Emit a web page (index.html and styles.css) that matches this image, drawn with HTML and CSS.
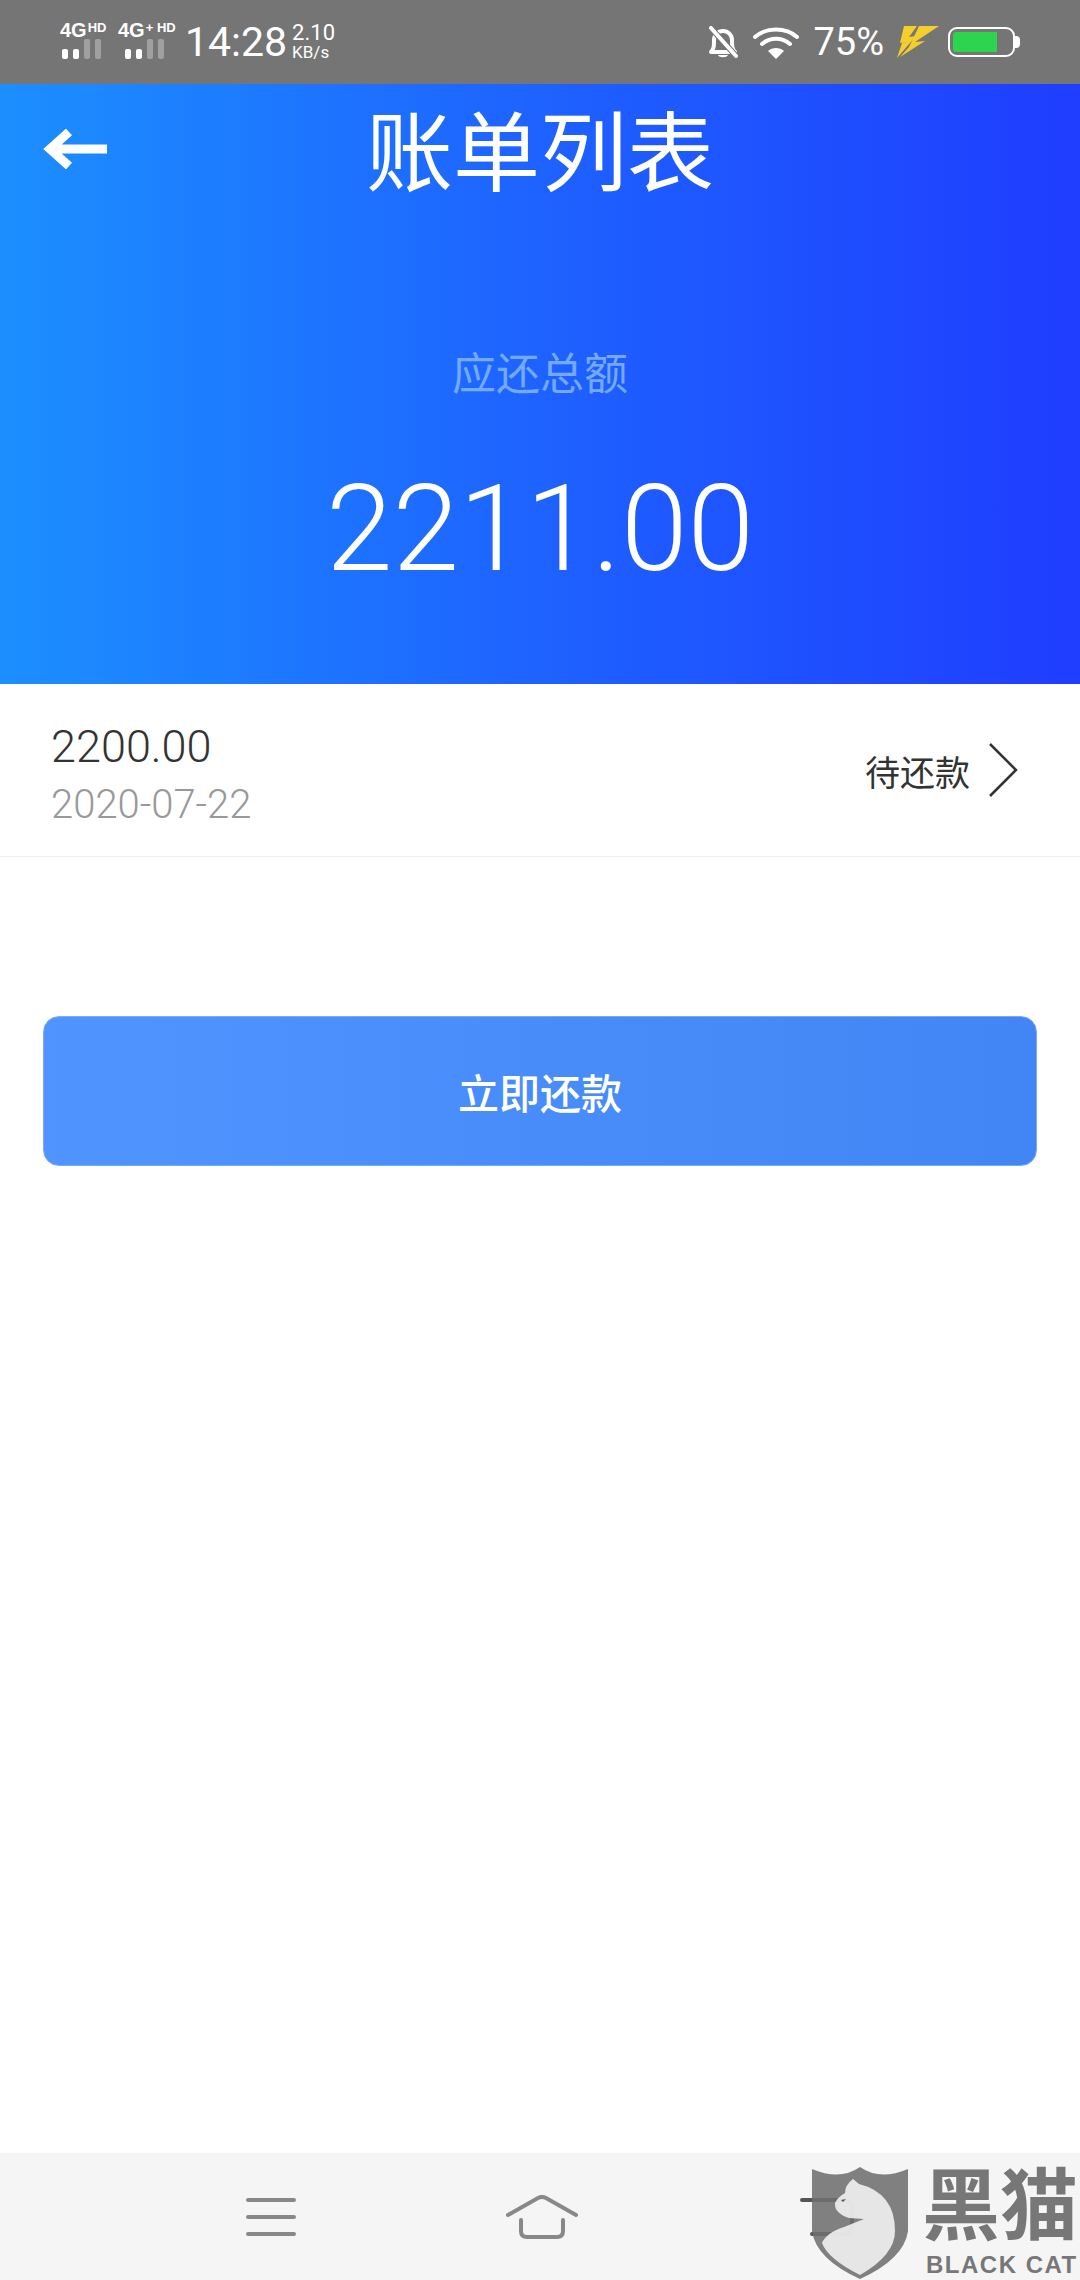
FILE: index.html
```html
<!DOCTYPE html>
<html lang="zh-CN">
<head>
    <meta charset="UTF-8">
    <title>账单列表</title>
    <link rel="stylesheet" href="styles.css">
</head>
<body>
    <div class="phone">
        <div class="status-bar">
            <div class="signal">
                <div class="sim">
                    <div class="sim-label">4G<span class="sim-tag">HD</span></div>
                    <div class="bars"><i class="bar"></i><i class="bar"></i><i class="bar off"></i><i class="bar off"></i></div>
                </div>
                <div class="sim">
                    <div class="sim-label">4G<span class="sim-tag">+ HD</span></div>
                    <div class="bars"><i class="bar"></i><i class="bar"></i><i class="bar off"></i><i class="bar off"></i></div>
                </div>
            </div>
            <div class="clock">14:28</div>
            <div class="speed">
                <span class="speed-value">2.10</span>
                <span class="speed-unit">KB/s</span>
            </div>
            <div class="status-right">
                <svg class="icon-bell" width="30" height="33" viewBox="0 0 30 33">
                    <path d="M3 26c3-3 3-6 3-12 0-5 4-9 9-9s9 4 9 9c0 6 0 9 3 12z" fill="none" stroke="#fff" stroke-width="4" stroke-linejoin="round"/>
                    <path d="M10 29c1 3 9 3 10 0z" fill="#fff"/>
                    <path d="M3 2l25 28" stroke="#757575" stroke-width="6"/>
                    <path d="M3 2l25 28" stroke="#fff" stroke-width="4" stroke-linecap="round"/>
                </svg>
                <svg class="icon-wifi" width="46" height="33" viewBox="0 0 46 33">
                    <path d="M2 11C13 1 33 1 44 11" fill="none" stroke="#fff" stroke-width="4" stroke-linecap="round"/>
                    <path d="M9 18c8-7 20-7 28 0" fill="none" stroke="#fff" stroke-width="4" stroke-linecap="round"/>
                    <path d="M23 33l-8-8c4-4 12-4 16 0z" fill="#fff"/>
                </svg>
                <span class="battery-pct">75%</span>
                <svg class="icon-bolt" width="42" height="32" viewBox="0 0 42 32">
                    <path d="M7 0h13L12 11l7-1L0 32l5-15 7-1-9 1z" fill="#f4cf2b"/>
                    <path d="M22 0h20L18 16l10-1L3 31l9-10z" fill="#f4cf2b"/>
                </svg>
                <div class="battery">
                    <div class="battery-body"><div class="battery-fill"></div></div>
                    <div class="battery-nub"></div>
                </div>
            </div>
        </div>

        <div class="summary">
            <div class="title-row">
                <svg class="back" width="64" height="40" viewBox="0 0 64 40">
                    <path d="M64 20H8M26 3L7 20l19 17" fill="none" stroke="#fff" stroke-width="9"/>
                </svg>
                <h1>账单列表</h1>
            </div>
            <div class="total-label">应还总额</div>
            <div class="total-value">2211.00</div>
        </div>

        <div class="bill-row">
            <div class="bill-info">
                <div class="bill-amount">2200.00</div>
                <div class="bill-date">2020-07-22</div>
            </div>
            <div class="bill-state">
                <span>待还款</span>
                <svg width="30" height="54" viewBox="0 0 30 54">
                    <path d="M2 1l26 26L2 53" fill="none" stroke="#333" stroke-width="2.5"/>
                </svg>
            </div>
        </div>

        <div class="action">
            <button class="pay-button">立即还款</button>
        </div>

        <div class="nav-bar">
            <svg class="nav-menu" width="50" height="38" viewBox="0 0 50 38">
                <path d="M2 2h46M2 19h46M2 36h46" stroke="#888" stroke-width="4" stroke-linecap="round"/>
            </svg>
            <svg class="nav-home" width="72" height="44" viewBox="0 0 72 44">
                <path d="M2 20L32 3q4-2 8 0l30 17" fill="none" stroke="#888" stroke-width="4" stroke-linecap="round"/>
                <path d="M15 25v11q0 6 6 6h30q6 0 6-6V25" fill="none" stroke="#888" stroke-width="4" stroke-linecap="round"/>
            </svg>
            <svg class="nav-back" width="54" height="38" viewBox="0 0 54 38">
                <path d="M2 2h40q10 0 10 10v14q0 10-10 10H12" fill="none" stroke="#555" stroke-width="4" stroke-linecap="round"/>
            </svg>
        </div>

        <div class="watermark">
            <svg class="wm-shield" width="96" height="112" viewBox="0 0 96 112">
                <path d="M0 2q28 12 48-2q20 14 48 2v62q-4 28-48 48Q4 92 0 64z" fill="#6f6f6f" fill-opacity="0.88"/>
                <path d="M41 12l6 5q36 9 36 47 0 24-35 44Q16 92 10 76q4-10 22-16l20-8-15-1q-15-5-14-15 3-6 10-10 0-8 8-14z" fill="#f8f8f8" fill-opacity="0.85"/>
                <path d="M29 33l5-1-3 3z" fill="#555"/>
            </svg>
            <div class="wm-text">
                <div class="wm-cn">黑猫</div>
                <div class="wm-en">BLACK CAT</div>
            </div>
        </div>
    </div>
</body>
</html>
```

FILE: styles.css
```css
* {
    box-sizing: border-box;
    margin: 0;
    padding: 0;
}

body {
    font-family: Roboto, "Noto Sans CJK SC", sans-serif;
    background-color: #fff;
    color: #333;
}

.phone {
    position: relative;
    width: 1080px;
    height: 2280px;
    display: flex;
    flex-direction: column;
    overflow: hidden;
}

/* Status bar */
.status-bar {
    height: 84px;
    flex: none;
    display: flex;
    align-items: center;
    padding: 0 60px;
    background-color: #757575;
    color: #fff;
}

.signal {
    display: flex;
    gap: 12px;
    margin-bottom: 6px;
}

.sim {
    display: flex;
    flex-direction: column;
    gap: 0;
    width: 46px;
    white-space: nowrap;
}

.sim + .sim {
    width: 54px;
}

.sim-label {
    font-family: "Liberation Sans", sans-serif;
    font-size: 20px;
    line-height: 17px;
    font-weight: 700;
}

.sim-tag {
    font-size: 13px;
    vertical-align: 5px;
    margin-left: 1px;
}

.bars {
    display: flex;
    align-items: flex-end;
    gap: 5px;
    height: 20px;
    margin-left: 2px;
}

.sim + .sim .bars {
    margin-left: 7px;
}

.bar {
    width: 6px;
    height: 10px;
    border-radius: 2px;
    background-color: #fff;
}

.bar.off {
    height: 20px;
    background-color: #a0a0a0;
}

.clock {
    margin-left: 13px;
    font-size: 41px;
    line-height: 44px;
}

.speed {
    display: flex;
    flex-direction: column;
    margin-left: 5px;
    width: 46px;
}

.speed-value {
    font-size: 22px;
    line-height: 20px;
}

.speed-unit {
    font-size: 17px;
    line-height: 18px;
}

.status-right {
    display: flex;
    align-items: center;
    margin-left: auto;
}

.icon-wifi {
    margin-left: 15px;
}

.battery-pct {
    margin-left: 14px;
    font-size: 38px;
}

.icon-bolt {
    margin-left: 13px;
}

.battery {
    display: flex;
    align-items: center;
    margin-left: 9px;
}

.battery-body {
    width: 67px;
    height: 30px;
    padding: 3px;
    border: 2px solid #fff;
    border-radius: 9px;
}

.battery-fill {
    width: 44px;
    height: 100%;
    border-radius: 3px 0 0 3px;
    background-color: #2bd54d;
}

.battery-nub {
    width: 5px;
    height: 12px;
    border-radius: 0 4px 4px 0;
    background-color: #fff;
}

/* Blue summary */
.summary {
    height: 600px;
    flex: none;
    background: linear-gradient(90deg, #1c8fff 0%, #1e62ff 50%, #1f3dff 100%);
    color: #fff;
    text-align: center;
}

.title-row {
    display: grid;
    grid-template-columns: 1fr auto 1fr;
    align-items: center;
    padding: 19px 0 0 43px;
}

.back {
    margin-bottom: 12px;
}

.title-row h1 {
    font-size: 87px;
    line-height: 104px;
    font-weight: 400;
    margin-left: -43px;
}

.total-label {
    margin-top: 138px;
    font-size: 44px;
    line-height: 60px;
    color: #73aaff;
}

.total-value {
    margin-top: 56px;
    font-size: 120px;
    line-height: 136px;
    font-weight: 300;
}

/* Bill list */
.bill-row {
    height: 173px;
    flex: none;
    display: flex;
    align-items: center;
    justify-content: space-between;
    padding: 0 62px 0 51px;
    border-bottom: 1px solid #eeeeee;
}

.bill-info {
    padding-top: 8px;
}

.bill-amount {
    font-size: 45px;
    line-height: 56px;
    font-weight: 300;
    color: #333;
}

.bill-date {
    margin-top: 2px;
    padding-top: 3px;
    font-size: 40px;
    line-height: 50px;
    font-weight: 300;
    color: #999;
}

.bill-state {
    display: flex;
    align-items: center;
    gap: 18px;
    font-size: 35px;
    color: #333;
}

.action {
    padding: 159px 43px 0;
}

.pay-button {
    display: block;
    width: 100%;
    height: 150px;
    border: 1px solid #7aa9f5;
    border-radius: 16px;
    background: linear-gradient(90deg, #4f94ff 0%, #4285f4 100%);
    color: #fff;
    font-family: inherit;
    font-size: 41px;
    font-weight: 500;
}

/* Bottom navigation */
.nav-bar {
    height: 127px;
    flex: none;
    margin-top: auto;
    display: flex;
    align-items: center;
    padding-left: 246px;
    background-color: #f5f5f5;
}

.nav-home {
    margin-left: 210px;
}

.nav-back {
    margin-left: 222px;
}

/* Watermark */
.watermark {
    position: absolute;
    left: 812px;
    top: 2167px;
    display: flex;
    gap: 14px;
}

.wm-text {
    padding-top: 1px;
    color: #777;
}

.wm-cn {
    font-size: 78px;
    line-height: 80px;
    font-weight: 700;
    white-space: nowrap;
}

.wm-en {
    margin: 5px 0 0 4px;
    font-family: "Liberation Sans", sans-serif;
    font-size: 24px;
    line-height: 24px;
    font-weight: 700;
    letter-spacing: 1.5px;
    white-space: nowrap;
}
```
